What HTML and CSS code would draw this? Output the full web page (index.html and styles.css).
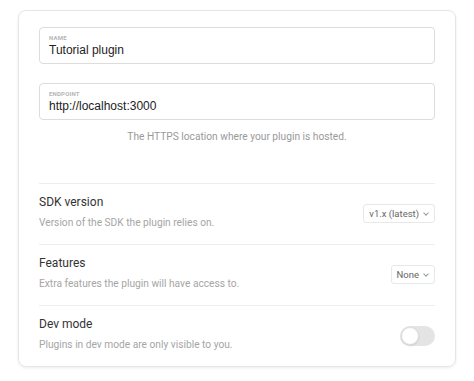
FILE: index.html
```html
<!DOCTYPE html>
<html lang="en">
<head>
    <meta charset="UTF-8">
    <meta name="viewport" content="width=device-width, initial-scale=1.0">
    <title>Plugin settings</title>
    <link rel="stylesheet" href="styles.css">
</head>
<body>
    <div class="card">
        <div class="field">
            <span class="field-label">Name</span>
            <span class="field-value">Tutorial plugin</span>
        </div>
        <div class="field">
            <span class="field-label">Endpoint</span>
            <span class="field-value">http://localhost:3000</span>
        </div>
        <div class="hint">The HTTPS location where your plugin is hosted.</div>

        <div class="setting">
            <div class="setting-text">
                <div class="setting-title">SDK version</div>
                <div class="setting-desc">Version of the SDK the plugin relies on.</div>
            </div>
            <div class="select">v1.x (latest) <span class="chevron"></span></div>
        </div>
        <div class="setting">
            <div class="setting-text">
                <div class="setting-title">Features</div>
                <div class="setting-desc">Extra features the plugin will have access to.</div>
            </div>
            <div class="select">None <span class="chevron"></span></div>
        </div>
        <div class="setting">
            <div class="setting-text">
                <div class="setting-title">Dev mode</div>
                <div class="setting-desc">Plugins in dev mode are only visible to you.</div>
            </div>
            <div class="toggle"><span class="knob"></span></div>
        </div>
    </div>
</body>
</html>
```
FILE: styles.css
```css
body {
    font-family: Roboto, 'Liberation Sans', sans-serif;
    margin: 0;
    padding: 10px 18px;
    background-color: #fff;
    color: #222;
}
.card {
    border: 1px solid #e6e6e6;
    border-radius: 8px;
    box-shadow: 0 1px 3px rgba(0,0,0,0.08);
    padding: 16px 20px 0;
}
.field {
    display: flex;
    flex-direction: column;
    justify-content: center;
    height: 35px;
    padding: 0 9px;
    border: 1px solid #dcdcdc;
    border-radius: 4px;
    margin-bottom: 19px;
}
.field-label {
    font-size: 6px;
    font-weight: 700;
    text-transform: uppercase;
    color: #b5b5b5;
    letter-spacing: 0.2px;
}
.field-value {
    font-family: 'Liberation Sans', Arial, sans-serif;
    font-size: 12px;
    color: #222;
    margin-top: 2px;
}
.hint {
    text-align: center;
    font-size: 10.2px;
    color: #999;
    margin-top: -8px;
    margin-bottom: 41px;
}
.setting {
    display: flex;
    align-items: center;
    justify-content: space-between;
    border-top: 1px solid #eee;
    padding: 11px 0 16px;
}
.setting-title {
    font-size: 12px;
    color: #333;
    margin-bottom: 8px;
}
.setting-desc {
    font-size: 10.2px;
    color: #a5a5a5;
}
.select {
    display: flex;
    align-items: center;
    gap: 5px;
    font-size: 9.5px;
    color: #666;
    padding: 3px 6px 3px 5px;
    border: 1px solid #e8e8e8;
    border-radius: 3px;
    margin-top: 4px;
}
.chevron {
    width: 3px;
    height: 3px;
    border-right: 1px solid #999;
    border-bottom: 1px solid #999;
    transform: rotate(45deg);
    margin-top: -2px;
}
.toggle {
    width: 35px;
    height: 20px;
    border-radius: 10px;
    background-color: #e4e4e4;
    display: flex;
    align-items: center;
    margin-top: 4px;
}
.knob {
    width: 18px;
    height: 18px;
    border-radius: 50%;
    background-color: #fff;
    border: 1px solid #ddd;
    box-sizing: border-box;
    margin-left: 1px;
    box-shadow: 0 1px 2px rgba(0,0,0,0.1);
}
```
